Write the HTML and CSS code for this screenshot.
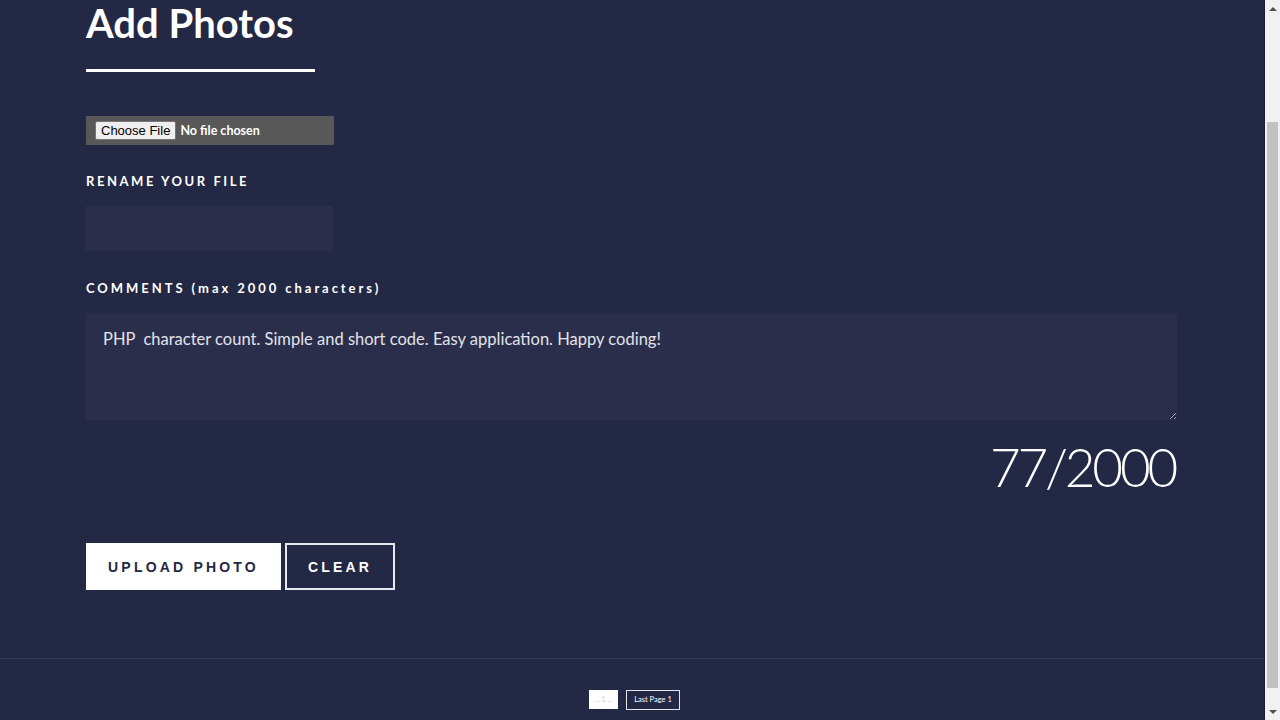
FILE: index.html
```html
<!DOCTYPE html>
<html lang="en">
<head>
<meta charset="utf-8">
<title>Add Photos</title>
<link rel="stylesheet" href="styles.css">
</head>
<body>
<div class="window">
  <div class="viewport">
    <main class="content">
      <h1 class="title">Add Photos</h1>
      <div class="rule"></div>
      <form class="form">
        <div class="file-field">
          <button type="button" class="file-btn">Choose File</button>
          <span class="file-name">No file chosen</span>
        </div>
        <label class="field-label" for="rename">RENAME YOUR FILE</label>
        <input class="text-input" id="rename" type="text">
        <label class="field-label field-label-2" for="comments">COMMENTS (max 2000 characters)</label>
        <textarea class="textarea" id="comments">PHP  character count. Simple and short code. Easy application. Happy coding!</textarea>
        <div class="counter">77/2000</div>
        <div class="actions">
          <button type="button" class="btn btn-primary">UPLOAD PHOTO</button>
          <button type="button" class="btn btn-outline">CLEAR</button>
        </div>
      </form>
    </main>
    <footer class="footer">
      <div class="pager">
        <span class="page-current">... 1 ...</span>
        <span class="page-last">Last Page 1</span>
      </div>
    </footer>
  </div>
  <div class="scrollbar">
    <div class="sb-arrow sb-up"></div>
    <div class="sb-track"><div class="sb-thumb"></div></div>
    <div class="sb-arrow sb-down"></div>
  </div>
</div>
</body>
</html>
```

FILE: styles.css
```css
* { box-sizing: border-box; }
html, body { margin: 0; padding: 0; }
body {
  width: 1280px;
  height: 720px;
  overflow: hidden;
  background: #232845;
  font-family: "Lato", "Noto Sans", sans-serif;
  color: #fff;
}
.window {
  display: flex;
  width: 1280px;
  height: 720px;
}
.viewport {
  flex: 1;
  display: flex;
  flex-direction: column;
  height: 720px;
  border-right: 1px solid #1a1d33;
}
.content {
  padding: 0 86px;
  height: 658px;
}
.title {
  margin: 0;
  font-family: "Lato", sans-serif;
  font-weight: 700;
  font-size: 40px;
  line-height: 46px;
  height: 46px;
  color: #fff;
}
.rule {
  margin-top: 23px;
  width: 229px;
  height: 3px;
  background: #fff;
}
.form {
  display: flex;
  flex-direction: column;
  align-items: flex-start;
}
.file-field {
  margin-top: 44px;
  width: 248px;
  height: 29px;
  background: #585858;
  display: flex;
  align-items: center;
  padding-left: 9px;
  gap: 4px;
}
.file-btn {
  font-family: "Liberation Sans", Arial, sans-serif;
  font-size: 13px;
  height: 19px;
  padding: 0 5px;
  background: #efefef;
  border: 1px solid #767676;
  border-radius: 2px;
  color: #000;
  line-height: 17px;
}
.file-name {
  font-family: "Lato", sans-serif;
  font-weight: 700;
  font-size: 12.5px;
  color: #fff;
}
.field-label {
  margin-top: 28px;
  font-family: "Lato", sans-serif;
  font-weight: 700;
  font-size: 13px;
  line-height: 16px;
  letter-spacing: 2.55px;
  color: #fff;
}
.field-label-2 {
  margin-top: 29px;
  letter-spacing: 2.95px;
}
.text-input {
  margin-top: 17px;
  width: 247px;
  height: 45px;
  border: none;
  background: #2a2e4b;
  outline: none;
}
.textarea {
  margin-top: 17px;
  width: 1091px;
  height: 107px;
  border: none;
  outline: none;
  background: #2a2e4b;
  color: #e2e3ea;
  font-family: "Lato", sans-serif;
  font-size: 16.5px;
  line-height: 24px;
  padding: 14px 17px;
  resize: vertical;
}
.counter {
  margin-top: 15px;
  align-self: stretch;
  width: 1091px;
  text-align: right;
  font-family: "Lato", sans-serif;
  font-weight: 300;
  font-size: 53px;
  line-height: 64px;
  letter-spacing: -3.2px;
  word-spacing: 0;
  padding-right: 2px;
  color: #fff;
}
.actions {
  margin-top: 44px;
  display: flex;
  gap: 4px;
}
.btn {
  height: 47px;
  font-family: "Liberation Sans", Arial, sans-serif;
  font-weight: 700;
  font-size: 14px;
  letter-spacing: 3.2px;
  cursor: pointer;
}
.btn-primary {
  width: 195px;
  background: #fff;
  color: #232845;
  border: 2px solid #fff;
}
.btn-outline {
  width: 110px;
  background: #232845;
  color: #fff;
  border: 2px solid #e8e8f0;
}
.footer {
  border-top: 1px solid #373c5b;
  flex: 1;
  display: flex;
  justify-content: center;
  padding-top: 31px;
  padding-left: 5px;
}
.pager {
  display: flex;
  gap: 8px;
  align-items: flex-start;
}
.page-current {
  width: 29px;
  height: 19px;
  background: #fff;
  color: #c9c9c9;
  font-size: 7px;
  line-height: 19px;
  text-align: center;
}
.page-last {
  width: 54px;
  height: 20px;
  border: 1px solid #e6e6ee;
  color: #fff;
  font-size: 7.5px;
  line-height: 18px;
  text-align: center;
}
.scrollbar {
  width: 15px;
  height: 720px;
  background: #f1f1f1;
  display: flex;
  flex-direction: column;
}
.sb-arrow {
  height: 17px;
  display: flex;
  justify-content: center;
  align-items: center;
}
.sb-up::before {
  content: "";
  border-left: 4px solid transparent;
  border-right: 4px solid transparent;
  border-bottom: 4px solid #505050;
}
.sb-down::before {
  content: "";
  border-left: 4px solid transparent;
  border-right: 4px solid transparent;
  border-top: 4px solid #505050;
}
.sb-track {
  flex: 1;
  padding: 105px 2px 15px 2px;
  display: flex;
}
.sb-thumb {
  flex: 1;
  background: #c1c1c1;
}
```
